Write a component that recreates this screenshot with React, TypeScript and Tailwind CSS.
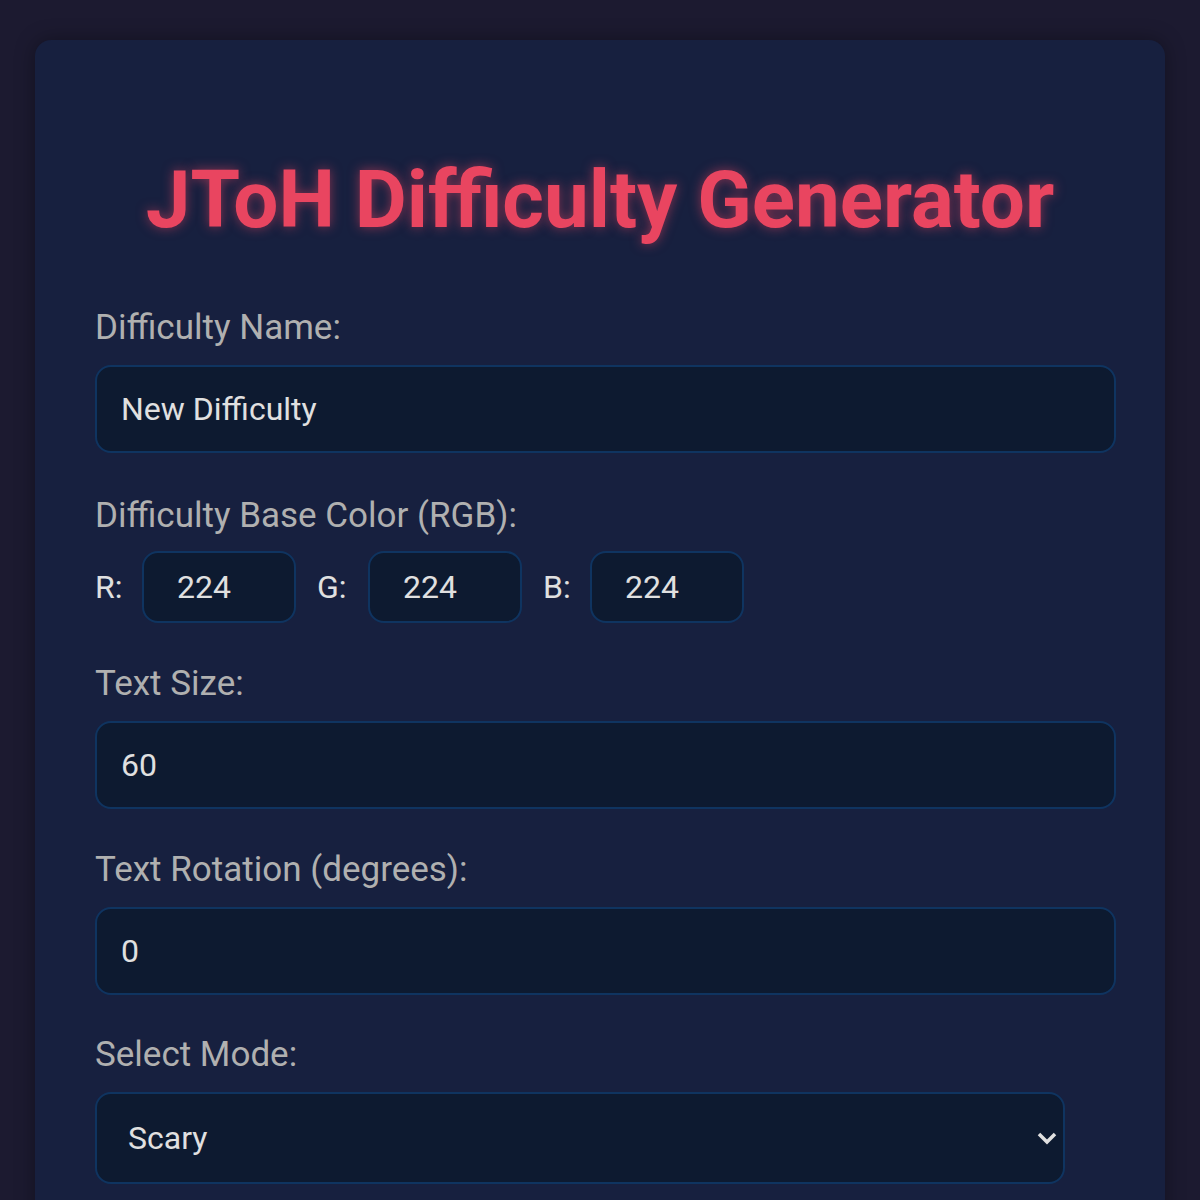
import { useState } from 'react'

const font = { fontFamily: 'Roboto, "Noto Sans", Arial, sans-serif' }

function Label({ children }: { children: React.ReactNode }) {
  return <label className="block text-[35px] leading-[41px] text-[#b0b0b0] mb-[17px]">{children}</label>
}

export default function App() {
  const [name, setName] = useState('New Difficulty')
  const [rgb, setRgb] = useState({ r: '224', g: '224', b: '224' })
  const [size, setSize] = useState('60')
  const [rotation, setRotation] = useState('0')
  const [mode, setMode] = useState('Scary')

  const inputCls =
    'block w-full h-[88px] px-[24px] bg-[#0d1a30] border-2 border-[#0f3460] rounded-[16px] text-[32px] text-[#e0e0e0] outline-none'

  return (
    <div className="h-[1200px] overflow-hidden bg-[#1c1a30] pt-[40px] pl-[35px] pr-[35px]" style={font}>
      <div className="bg-[#17203f] rounded-[16px] min-h-[1300px] pt-[113px] pl-[60px] pr-[49px] shadow-[0_0_20px_rgba(0,0,0,0.35)]">
        <h1 className="-ml-[11px] text-center text-[80px] leading-[94px] font-bold text-[#e94560] mb-[60px] [text-shadow:0_0_12px_rgba(233,69,96,0.55)]">
          JToH Difficulty Generator
        </h1>

        <div className="mb-[42px]">
          <Label>Difficulty Name:</Label>
          <input className={inputCls} value={name} onChange={e => setName(e.target.value)} />
        </div>

        <div className="mb-[40px]">
          <Label>Difficulty Base Color (RGB):</Label>
          <div className="flex items-center gap-[21px] -mt-[2px] text-[32px] text-[#e0e0e0]">
            {(['r', 'g', 'b'] as const).map(k => (
              <div key={k} className="flex items-center gap-[21px]">
                <span className={k === 'g' ? 'w-[30px]' : 'w-[26px]'}>{k.toUpperCase()}:</span>
                <input
                  className="w-[154px] h-[72px] pl-[33px] bg-[#0d1a30] border-2 border-[#0f3460] rounded-[16px] text-[32px] text-[#e0e0e0] outline-none"
                  value={rgb[k]}
                  onChange={e => setRgb({ ...rgb, [k]: e.target.value })}
                />
              </div>
            ))}
          </div>
        </div>

        <div className="mb-[40px]">
          <Label>Text Size:</Label>
          <input className={inputCls} value={size} onChange={e => setSize(e.target.value)} />
        </div>

        <div className="mb-[39px]">
          <Label>Text Rotation (degrees):</Label>
          <input className={inputCls} value={rotation} onChange={e => setRotation(e.target.value)} />
        </div>

        <div>
          <Label>Select Mode:</Label>
          <div className="relative w-[970px]">
            <select
              className="block w-full h-[92px] pl-[31px] appearance-none bg-[#0d1a30] border-2 border-[#0f3460] rounded-[16px] text-[32px] text-[#e0e0e0] outline-none"
              value={mode}
              onChange={e => setMode(e.target.value)}
            >
              <option>Scary</option>
              <option>Normal</option>
            </select>
            <svg className="absolute right-[8px] top-[39px] pointer-events-none" width="20" height="14" viewBox="0 0 20 14">
              <path d="M2 3 L10 11 L18 3" fill="none" stroke="#e0e0e0" strokeWidth="3.5" />
            </svg>
          </div>
        </div>
      </div>
    </div>
  )
}
